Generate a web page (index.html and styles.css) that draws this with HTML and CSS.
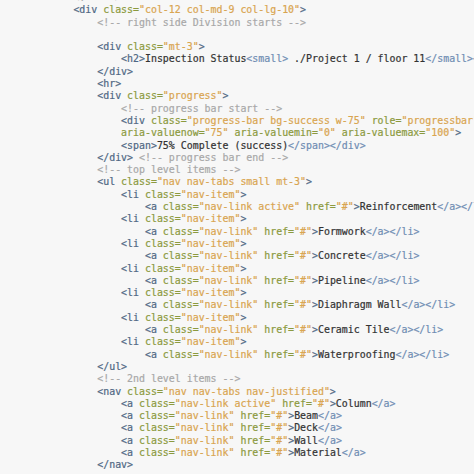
FILE: index.html
```html
<!DOCTYPE html>
<html>
<head>
<meta charset="utf-8">
<link rel="stylesheet" href="styles.css">
</head>
<body>
<pre class="code"><span class="c">            &lt;!-- --&gt;</span>
            <span class="t">&lt;div</span> <span class="a">class=</span><span class="s">"col-12 col-md-9 col-lg-10"</span><span class="t">&gt;</span>
                <span class="c">&lt;!-- right side Division starts --&gt;</span>

                <span class="t">&lt;div</span> <span class="a">class=</span><span class="s">"mt-3"</span><span class="t">&gt;</span>
                    <span class="t">&lt;h2&gt;</span>Inspection Status<span class="t2">&lt;small&gt;</span> ./Project 1 / floor 11<span class="t2">&lt;/small&gt;&lt;/h2&gt;</span>
                <span class="t">&lt;/div&gt;</span>
                <span class="t">&lt;hr&gt;</span>
                <span class="t">&lt;div</span> <span class="a">class=</span><span class="s">"progress"</span><span class="t">&gt;</span>
                    <span class="c">&lt;!-- progress bar start --&gt;</span>
                    <span class="t">&lt;div</span> <span class="a">class=</span><span class="s">"progress-bar bg-success w-75"</span> <span class="a">role=</span><span class="s">"progressbar"</span>
                    <span class="a">aria-valuenow=</span><span class="s">"75"</span> <span class="a">aria-valuemin=</span><span class="s">"0"</span> <span class="a">aria-valuemax=</span><span class="s">"100"</span><span class="t">&gt;</span>
                    <span class="t">&lt;span&gt;</span>75% Complete (success)<span class="t2">&lt;/span&gt;&lt;/div&gt;</span>
                <span class="t">&lt;/div&gt;</span> <span class="c">&lt;!-- progress bar end --&gt;</span>
                <span class="c">&lt;!-- top level items --&gt;</span>
                <span class="t">&lt;ul</span> <span class="a">class=</span><span class="s">"nav nav-tabs small mt-3"</span><span class="t">&gt;</span>
                    <span class="t">&lt;li</span> <span class="a">class=</span><span class="s">"nav-item"</span><span class="t">&gt;</span>
                        <span class="t">&lt;a</span> <span class="a">class=</span><span class="s">"nav-link active"</span> <span class="a">href=</span><span class="s">"#"</span><span class="t">&gt;</span>Reinforcement<span class="t2">&lt;/a&gt;&lt;/li&gt;</span>
                    <span class="t">&lt;li</span> <span class="a">class=</span><span class="s">"nav-item"</span><span class="t">&gt;</span>
                        <span class="t">&lt;a</span> <span class="a">class=</span><span class="s">"nav-link"</span> <span class="a">href=</span><span class="s">"#"</span><span class="t">&gt;</span>Formwork<span class="t2">&lt;/a&gt;&lt;/li&gt;</span>
                    <span class="t">&lt;li</span> <span class="a">class=</span><span class="s">"nav-item"</span><span class="t">&gt;</span>
                        <span class="t">&lt;a</span> <span class="a">class=</span><span class="s">"nav-link"</span> <span class="a">href=</span><span class="s">"#"</span><span class="t">&gt;</span>Concrete<span class="t2">&lt;/a&gt;&lt;/li&gt;</span>
                    <span class="t">&lt;li</span> <span class="a">class=</span><span class="s">"nav-item"</span><span class="t">&gt;</span>
                        <span class="t">&lt;a</span> <span class="a">class=</span><span class="s">"nav-link"</span> <span class="a">href=</span><span class="s">"#"</span><span class="t">&gt;</span>Pipeline<span class="t2">&lt;/a&gt;&lt;/li&gt;</span>
                    <span class="t">&lt;li</span> <span class="a">class=</span><span class="s">"nav-item"</span><span class="t">&gt;</span>
                        <span class="t">&lt;a</span> <span class="a">class=</span><span class="s">"nav-link"</span> <span class="a">href=</span><span class="s">"#"</span><span class="t">&gt;</span>Diaphragm Wall<span class="t2">&lt;/a&gt;&lt;/li&gt;</span>
                    <span class="t">&lt;li</span> <span class="a">class=</span><span class="s">"nav-item"</span><span class="t">&gt;</span>
                        <span class="t">&lt;a</span> <span class="a">class=</span><span class="s">"nav-link"</span> <span class="a">href=</span><span class="s">"#"</span><span class="t">&gt;</span>Ceramic Tile<span class="t2">&lt;/a&gt;&lt;/li&gt;</span>
                    <span class="t">&lt;li</span> <span class="a">class=</span><span class="s">"nav-item"</span><span class="t">&gt;</span>
                        <span class="t">&lt;a</span> <span class="a">class=</span><span class="s">"nav-link"</span> <span class="a">href=</span><span class="s">"#"</span><span class="t">&gt;</span>Waterproofing<span class="t2">&lt;/a&gt;&lt;/li&gt;</span>
                <span class="t">&lt;/ul&gt;</span>
                <span class="c">&lt;!-- 2nd level items --&gt;</span>
                <span class="t">&lt;nav</span> <span class="a">class=</span><span class="s">"nav nav-tabs nav-justified"</span><span class="t">&gt;</span>
                    <span class="t">&lt;a</span> <span class="a">class=</span><span class="s">"nav-link active"</span> <span class="a">href=</span><span class="s">"#"</span><span class="t">&gt;</span>Column<span class="t2">&lt;/a&gt;</span>
                    <span class="t">&lt;a</span> <span class="a">class=</span><span class="s">"nav-link"</span> <span class="a">href=</span><span class="s">"#"</span><span class="t">&gt;</span>Beam<span class="t2">&lt;/a&gt;</span>
                    <span class="t">&lt;a</span> <span class="a">class=</span><span class="s">"nav-link"</span> <span class="a">href=</span><span class="s">"#"</span><span class="t">&gt;</span>Deck<span class="t2">&lt;/a&gt;</span>
                    <span class="t">&lt;a</span> <span class="a">class=</span><span class="s">"nav-link"</span> <span class="a">href=</span><span class="s">"#"</span><span class="t">&gt;</span>Wall<span class="t2">&lt;/a&gt;</span>
                    <span class="t">&lt;a</span> <span class="a">class=</span><span class="s">"nav-link"</span> <span class="a">href=</span><span class="s">"#"</span><span class="t">&gt;</span>Material<span class="t2">&lt;/a&gt;</span>
                <span class="t">&lt;/nav&gt;</span></pre>
</body>
</html>
```
FILE: styles.css
```css
html, body {
  margin: 0;
  padding: 0;
  background: #f7f7f7;
  overflow: hidden;
}
.code {
  margin: -8px 0 0 0;
  padding: 0 0 0 1.8px;
  font-family: "DejaVu Sans Mono", "Liberation Mono", monospace;
  font-size: 9.92px;
  line-height: 12.3px;
  color: #333333;
  white-space: pre;
  -webkit-text-stroke: 0.2px;
}
.t { color: #4f6783; }
.t2 { color: #6f8db3; }
.a { color: #8c9a3e; }
.s { color: #d9a550; }
.c { color: #a8a8a8; }
```
